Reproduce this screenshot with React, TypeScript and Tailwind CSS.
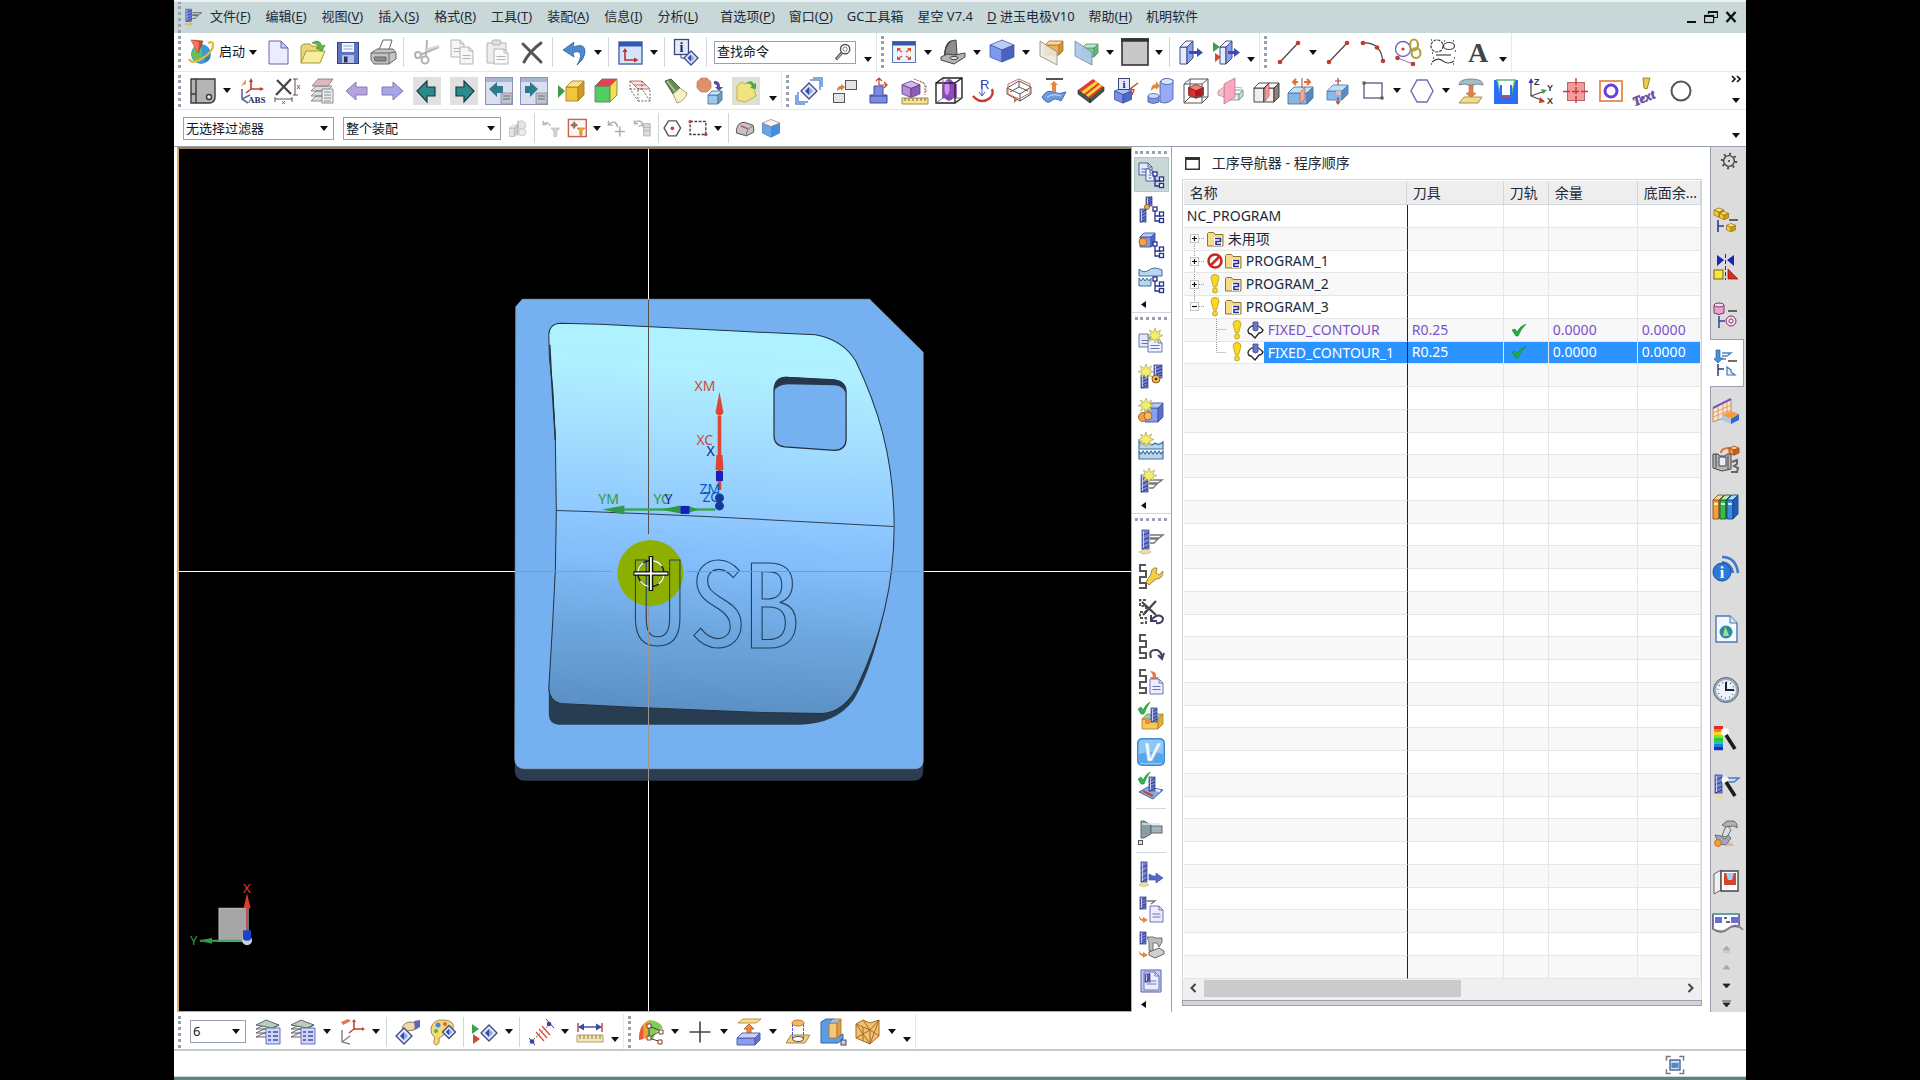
import React, { type ReactNode } from "react";

/* ---------- drawing parts shared by the icons ---------- */

type BoxProps = { x: number; y: number; w: number; h: number; d?: number; f: string; t: string; s: string; k?: string };
const Box = ({ x, y, w, h, d = 5, f, t, s, k = "#555" }: BoxProps) => (
  <g stroke={k} strokeWidth=".9" strokeLinejoin="round">
    <path d={`M${x} ${y + d}h${w}v${h}h${-w}z`} fill={f} />
    <path d={`M${x} ${y + d}l${d} ${-d}h${w}l${-d} ${d}z`} fill={t} />
    <path d={`M${x + w} ${y + d}l${d} ${-d}v${h}l${-d} ${d}z`} fill={s} />
  </g>
);

type IsoProps = { x: number; y: number; r: number; a: string; b: string; c: string; k?: string };
const Iso = ({ x, y, r, a, b, c, k = "#445" }: IsoProps) => (
  <g stroke={k} strokeWidth=".8" strokeLinejoin="round">
    <path d={`M${x} ${y - r}l${r} ${r / 2.4}l${-r} ${r / 2.4}l${-r} ${-r / 2.4}z`} fill={a} />
    <path d={`M${x - r} ${y - r + r / 2.4}l${r} ${r / 2.4}v${r}l${-r} ${-r / 2.4}z`} fill={b} />
    <path d={`M${x + r} ${y - r + r / 2.4}l${-r} ${r / 2.4}v${r}l${r} ${-r / 2.4}z`} fill={c} />
  </g>
);

const Dia = ({ x, y, r }: { x: number; y: number; r: number }) => (
  <g strokeLinejoin="round">
    <path d={`M${x - r} ${y}L${x} ${y - r}L${x + r} ${y}L${x} ${y + r}z`} fill="#dfe4f6" stroke="#3d4a86" strokeWidth="1.3" />
    <path d={`M${x - r / 2} ${y}L${x} ${y - r / 2}V${y + r / 2}z`} fill="#2b4bb0" />
    <path d={`M${x + r / 2} ${y}L${x} ${y - r / 2}V${y + r / 2}z`} fill="#8ea4e0" />
  </g>
);

type DocProps = { x: number; y: number; w: number; h: number; f?: string; k?: string };
const Doc = ({ x, y, w, h, f = "#eceeff", k = "#6d74ac" }: DocProps) => (
  <g stroke={k} strokeWidth="1" strokeLinejoin="round">
    <path d={`M${x} ${y}h${w - 4}l4 4v${h - 4}h${-w}z`} fill={f} />
    <path d={`M${x + w - 4} ${y}v4h4`} fill="none" />
    <path d={`M${x + 2.5} ${y + h / 2}h${w - 5}m${5 - w} 3h${w - 5}`} fill="none" />
  </g>
);

const Mill = ({ x, y, h = 15, w = 7 }: { x: number; y: number; h?: number; w?: number }) => (
  <g>
    <rect x={x} y={y} width={w} height={h} fill="#7484d4" stroke="#3f4a94" strokeWidth=".8" />
    <path d={`M${x} ${y + h * 0.3}l${w} -3M${x} ${y + h * 0.55}l${w} -3M${x} ${y + h * 0.8}l${w} -3M${x} ${y + h}l${w} -3`} stroke="#2c3680" strokeWidth="1" />
    <path d={`M${x + 1.5} ${y + 1}v${h - 2}`} stroke="#c3ccf6" strokeWidth="1" />
  </g>
);

const Passes = ({ x, y, k = "#777" }: { x: number; y: number; k?: string }) => (
  <path d={`M${x} ${y}h13l-4 3h-9M${x} ${y + 4}h8l-4 4h-4`} fill="none" stroke={k} strokeWidth="1.4" />
);

const Spark = ({ x, y }: { x: number; y: number }) => (
  <path
    d={`M${x} ${y - 7}l1.6 4.4l4 -2.4l-1.8 4.2l4.2 1.4l-4.4 1.4l2 4.2l-4 -2.4l-1.6 4.2l-1.6 -4.2l-4 2.4l2 -4.2l-4.4 -1.4l4.2 -1.4l-1.8 -4.2l4 2.4z`}
    fill="#f4ee6a"
    stroke="#a8a860"
    strokeWidth=".7"
  />
);

const Tree = () => (
  <g fill="#fff" stroke="#23308c" strokeWidth="1.3">
    <path d="M18 15v10h6M18 20h6" fill="none" />
    <rect x="16" y="11" width="4" height="4" />
    <rect x="22.500" y="16" width="4" height="4" />
    <rect x="22.500" y="22.500" width="4" height="4" />
  </g>
);

const Zig = ({ k = "#555", dash }: { k?: string; dash?: string }) => (
  <path d="M9 2H3v6h6v6H3v6h6v5H2" fill="none" stroke={k} strokeWidth="2" strokeDasharray={dash} />
);

const Tick = ({ x, y }: { x: number; y: number }) => (
  <path d={`M${x} ${y}l3 -2l2 3q3 -6 7 -8q-4 6 -6 12h-3z`} fill="#2fb450" stroke="#1c8a38" strokeWidth=".6" />
);

const Waves = ({ y }: { y: number }) => (
  <g fill="#b9d6ee" stroke="#3d6f9c" strokeWidth="1.2">
    <path d={`M2 ${y}q4 5 8 1q4 5 8 1q4 3 8 -1v7h-24z`} />
    <path d={`M2 ${y + 10}l2 3l2 -3l2 3l2 -3l2 3l2 -3l2 3l2 -3l2 3l2 -3l2 3l2 -3v8h-24z`} />
  </g>
);

const Dots = ({ pts, c = "#c43a30" }: { pts: number[][]; c?: string }) => (
  <g fill={c}>
    {pts.map(([x, y]) => (
      <circle key={`${x}-${y}`} cx={x} cy={y} r="2.300" />
    ))}
  </g>
);

const Folder = ({ k = "#a8963a" }: { k?: string }) => (
  <g strokeLinejoin="round">
    <path d="M2 25V8l3-2h6l2 2h9v6z" fill="#e8d678" stroke={k} />
    <path d="M2 25l5-12h19l-5 12z" fill="#f8ec9e" stroke={k} />
    <path d="M13 5q7-5 10 3l3-1l-3 6l-6-3l3-1q-2-4-7-4z" fill="#5cb848" stroke="#388a2c" strokeWidth=".7" />
  </g>
);

const BLUE = { a: "#a9bdf6", b: "#7690e6", c: "#4d68c8", k: "#3a4fa0" };

const icons: Record<string, ReactNode> = {
  app: (
    <g>
      <Mill x={4} y={3} h={17} w={8} />
      <Passes x={13} y={8} k="#667" />
      <path d="M3 24q5-4 10 0q-4 3-10 0z" fill="#f2dc62" stroke="#a89030" strokeWidth=".6" />
    </g>
  ),
  start: (
    <g>
      <circle cx="14" cy="16" r="10" fill="#3d9bd4" />
      <path d="M7 10q8-3 8 5t-7 8q-6-5-1-13z" fill="#64bf5c" />
      <path d="M17 18q5-4 6 0t-5 6z" fill="#2c7fc0" />
      <path d="M2 21q3 6 14-1t10-14q0-3-5-1" fill="none" stroke="#e8b83a" strokeWidth="2.200" />
      <path d="M4 2l12 1l-5 12z" fill="#d8402e" stroke="#a82a1c" strokeWidth=".6" />
      <path d="M4 2l8 2l-1 11z" fill="#f07860" />
    </g>
  ),
  newf: (
    <g stroke="#6a64a8" strokeLinejoin="round">
      <path d="M5 3h12l7 7v16H5z" fill="#ecebff" />
      <path d="M17 3v7h7z" fill="#c9c6f2" />
    </g>
  ),
  open: <Folder />,
  save: (
    <g>
      <rect x="3.500" y="4.500" width="21" height="21" fill="#5b74c4" stroke="#35467e" />
      <rect x="8" y="5" width="12" height="9" fill="#f4f6ff" />
      <path d="M9.500 8h9m-9 3h9" stroke="#9aa5cc" />
      <rect x="8" y="17" width="12" height="8" fill="#b8c2e6" />
      <rect x="10" y="18.500" width="3.500" height="6" fill="#26335e" />
    </g>
  ),
  print: (
    <g stroke="#666" strokeLinejoin="round">
      <path d="M10 12l4-10h9l-3 10z" fill="#fff" />
      <path d="M2 15l6-4h16l3 4v6l-7 5H5l-3-4z" fill="#c4c4c4" />
      <path d="M2 15h18l7-1M20 15v11" fill="none" />
      <path d="M5 19h12v4H6z" fill="#8c8c8c" />
    </g>
  ),
  cut: (
    <g fill="none" stroke="#b4b4b4" strokeWidth="2">
      <path d="M14 2l-1 16M26 9L7 17" />
      <circle cx="5" cy="17" r="3" />
      <circle cx="12" cy="22" r="3.500" />
      <path d="M26 8l-14 4" stroke="#d6d6d6" />
    </g>
  ),
  copy: (
    <g>
      <Doc x={3} y={2} w={13} h={17} f="#f6f6f6" k="#b4b4b4" />
      <Doc x={12} y={9} w={13} h={17} f="#f6f6f6" k="#b4b4b4" />
    </g>
  ),
  paste: (
    <g>
      <path d="M4 5h19v20H4z" fill="#eee" stroke="#b4b4b4" />
      <rect x="9" y="2" width="9" height="5" rx="2" fill="#ddd" stroke="#b4b4b4" />
      <Doc x={11} y={11} w={14} h={15} f="#fafafa" k="#b4b4b4" />
    </g>
  ),
  del: <path d="M5 6l18 18M23 5Q12 13 6 24" stroke="#555" strokeWidth="3" strokeLinecap="round" fill="none" />,
  undo: <path d="M3 12L14 4l-1 5q13-5 12 6q-1 7-8 12q6-10 2-13q-3-1-6 1l1 4z" fill="#4f88cf" stroke="#3263a4" strokeWidth=".8" />,
  wcs: (
    <g>
      <rect x="3" y="4" width="23" height="22" fill="#d5e4f8" stroke="#4065ae" strokeWidth="1.400" />
      <rect x="3" y="4" width="23" height="4.500" fill="#3258b4" />
      <path d="M9 12v10h11" fill="none" stroke="#b8322a" strokeWidth="1.600" />
      <path d="M6.500 14L9 10l2.500 4zM18 19.500l4.500 2.500l-4.500 2.500z" fill="#b8322a" />
    </g>
  ),
  info: (
    <g>
      <rect x="2.500" y="1.500" width="14" height="15" fill="#e6e9fa" stroke="#3c4878" strokeWidth="1.300" />
      <text x="9.500" y="14" textAnchor="middle" className="text-[14px] font-bold" fill="#1e2c66" fontFamily="Liberation Serif, serif">i</text>
      <Dia x={19} y={20} r={7} />
      <path d="M9 17v3h3" fill="none" stroke="#3c4878" />
    </g>
  ),
  mag: (
    <g fill="none" stroke="#555" strokeWidth="2">
      <circle cx="17" cy="10" r="6.500" />
      <circle cx="17" cy="10" r="3" strokeWidth="1" />
      <path d="M12.500 15L4 24.500" strokeWidth="4" />
      <path d="M12 16l-7 8" stroke="#ddd" strokeWidth="1.400" />
    </g>
  ),
  fit: (
    <g>
      <rect x="2.500" y="3.500" width="23" height="21" fill="#eef3fc" stroke="#5b78b8" />
      <rect x="2.500" y="3.500" width="23" height="4" fill="#3558a8" />
      <path d="M7 14v-4h4zM21 14v-4h-4zM7 18v4h4zM21 18v4h-4z" fill="#d8502c" />
      <path d="M8 11l4 3M20 11l-4 3M8 21l4-3M20 21l-4-3" stroke="#d8502c" strokeWidth="1.300" />
    </g>
  ),
  shade: (
    <g stroke="#444" strokeLinejoin="round">
      <path d="M6 20q-1-13 6-17l5-1l1 14z" fill="#8e8e8e" />
      <path d="M6 20q-1-13 6-17" fill="none" strokeWidth="1.500" />
      <path d="M2 19l6-3l8 1l10-2v4l-11 7l-13-4z" fill="#b4b4b4" />
      <ellipse cx="15" cy="20" rx="4" ry="1.600" fill="#e4e4e4" />
    </g>
  ),
  cube: <Iso x={14} y={14} r={12} a="#bccafa" b="#7f99ee" c="#4a63c0" k="#4258a8" />,
  clipA: (
    <g strokeWidth=".8">
      <Box x={8} y={3} w={14} h={10} d={4} f="#eeb25c" t="#f8d69a" s="#d8923a" k="#b07a34" />
      <path d="M3 3l17 11v13L3 18z" fill="#ece8dc" fillOpacity=".85" stroke="#8c887c" />
    </g>
  ),
  clipB: (
    <g strokeWidth=".8">
      <Box x={10} y={6} w={12} h={9} d={4} f="#8ccf9c" t="#bce6c4" s="#6ab47c" k="#5a9868" />
      <path d="M3 3l17 11v13L3 18z" fill="#a9c6e8" fillOpacity=".9" stroke="#6a86aa" />
    </g>
  ),
  bg: (
    <g>
      <rect x="1" y="1" width="26" height="26" fill="#c8c8c8" stroke="#333" strokeWidth="1.600" />
      <path d="M0 2h28" stroke="#333" strokeWidth="3.500" />
    </g>
  ),
  slabOut: (
    <g>
      <Box x={3} y={3} w={7} h={17} d={6} f="#e6eaff" t="#f2f4ff" s="#8c9eea" k="#33406e" />
      <path d="M12 13h8v-3l6 4.500l-6 4.500v-3h-8z" fill="#3a4cb4" />
    </g>
  ),
  slabIn: (
    <g>
      <path d="M1 4l7 5l-7 5z" fill="#3da04c" />
      <path d="M3 15l6 4l-6 5z" fill="#d04a34" />
      <Box x={8} y={3} w={6} h={17} d={6} f="#e6eaff" t="#f2f4ff" s="#8c9eea" k="#33406e" />
      <path d="M16 13h6v-3l6 4.500l-6 4.500v-3h-6z" fill="#3a4cb4" />
    </g>
  ),
  line: (
    <g>
      <path d="M5 24L23 5" stroke="#444" strokeWidth="1.200" />
      <Dots pts={[[5, 24], [23, 5]]} />
    </g>
  ),
  arc: (
    <g>
      <path d="M4 5q18-1 20 19" stroke="#444" strokeWidth="1.200" fill="none" />
      <Dots pts={[[4, 5], [18, 9.5], [24, 23]]} />
    </g>
  ),
  curves: (
    <g fill="none">
      <circle cx="9" cy="11" r="7.500" stroke="#7467b8" strokeWidth="1.400" />
      <circle cx="9" cy="11" r="1.600" fill="#c43a30" />
      <ellipse cx="20" cy="7" rx="4" ry="5.500" stroke="#b4a038" strokeWidth="2.200" />
      <ellipse cx="22" cy="15" rx="4.500" ry="5" stroke="#b4a038" strokeWidth="2.200" />
      <path d="M4 20l15 6" stroke="#8d70b8" />
      <Dots pts={[[3.5, 20], [19, 26]]} />
    </g>
  ),
  shapes: (
    <g fill="none" stroke="#444" strokeWidth="1.200">
      <circle cx="8" cy="8" r="6" strokeDasharray="3 1" />
      <ellipse cx="20" cy="8" rx="5.500" ry="3.500" />
      <path d="M7 17h15" />
      <path d="M3 24q6-5 11-1t11 0" />
      <path d="M2 2h1M15 3h1M24 3h1M3 15h1M26 13h1M4 20h1M25 20h1M2 26h1M24 26h1" strokeWidth="1.600" />
    </g>
  ),
  textA: (
    <text x="14" y="24" textAnchor="middle" className="text-[28px] font-bold" fill="#444" fontFamily="Liberation Serif, serif">A</text>
  ),
  layerBox: (
    <g stroke="#3a3a3a" strokeWidth="1.400">
      <path d="M2 2h24v18q0 6-6 6H2z" fill="#b4b4b4" />
      <path d="M7 2v24M2 17h5" fill="none" />
      <circle cx="20" cy="20" r="2.500" fill="#eee" />
    </g>
  ),
  abs: (
    <g>
      <path d="M3 9l5-7v5z" fill="#e0a050" />
      <path d="M13 3v9h11M13 12l-5 4" fill="none" stroke="#b84030" strokeWidth="1.600" />
      <path d="M11 5l2-4l2 4zM22 10l4 2l-4 2z" fill="#b84030" />
      <path d="M4 12v10l6 4M4 22l8-4" fill="none" stroke="#6068a8" strokeWidth="1.600" />
      <text x="10" y="26" className="text-[9px] font-bold" fill="#2a2a5c" fontFamily="Liberation Serif, serif">ABS</text>
    </g>
  ),
  xdim: (
    <g fill="none">
      <path d="M4 3l14 14M18 2L3 18" stroke="#444" strokeWidth="2.200" />
      <path d="M22 2v16M20 2h5M20 18h5M2 22h17M2 20v5M19 20v5" stroke="#555" />
      <path d="M24 8l3 4m0-4l-3 4M9 24l3 3m0-3l-3 3" stroke="#c04830" />
    </g>
  ),
  sheets: (
    <g stroke="#777" strokeWidth=".8">
      <path d="M3 24l5-5h16l-5 5zM3 19l5-5h16l-5 5zM3 14l5-5h16l-5 5z" fill="#ddd" />
      <path d="M4 9l6-7h15l-5 7z" fill="#e0b8bc" />
      <path d="M14 12h11v14H14z" fill="#eceaf2" />
      <path d="M16 15h7m-7 3h7m-7 3h7m-7 3h7" />
    </g>
  ),
  left: <path d="M3 14L13 5v5h11v8H13v5z" fill="#b4a4dc" stroke="#8a7cb8" />,
  right: <path d="M25 14L15 5v5H4v8h11v5z" fill="#a8a4e8" stroke="#7c7cc0" />,
  leftBox: (
    <g>
      <path d="M0 0h28v28H0z" fill="#e0e0e0" />
      <path d="M4 14L14 4v6h8v9h-8v6z" fill="#2d8a8c" stroke="#163f44" strokeWidth="1.200" />
    </g>
  ),
  rightBox: (
    <g>
      <path d="M0 0h28v28H0z" fill="#e0e0e0" />
      <path d="M24 14L14 4v6H6v9h8v6z" fill="#2d8a8c" stroke="#163f44" strokeWidth="1.200" />
    </g>
  ),
  winL: (
    <g>
      <rect x=".500" y=".500" width="27" height="27" fill="#d9dff0" stroke="#8a94b4" />
      <path d="M1 1h26v4H1z" fill="#a8b4d4" />
      <path d="M4 12l8-7v4h6v7h-6v4z" fill="#2d7a8c" />
      <path d="M16 16h11v11H16z" fill="#c0c4cc" stroke="#889" strokeWidth=".8" />
      <path d="M18 19h7m-7 3h7" stroke="#667" />
    </g>
  ),
  winR: (
    <g>
      <rect x=".500" y=".500" width="27" height="27" fill="#d9dff0" stroke="#8a94b4" />
      <path d="M1 1h26v4H1z" fill="#a8b4d4" />
      <path d="M18 12l-8-7v4H5v7h5v4z" fill="#2d7a8c" />
      <path d="M16 16h11v11H16z" fill="#c0c4cc" stroke="#889" strokeWidth=".8" />
      <path d="M18 19h7m-7 3h7" stroke="#667" />
    </g>
  ),
  addBox: (
    <g>
      <path d="M1 8l7 6l-7 7z" fill="#3f9a48" />
      <Box x={9} y={4} w={12} h={14} d={6} f="#f3c53c" t="#fbe48c" s="#cf9a22" k="#a88424" />
    </g>
  ),
  rgb: <Box x={3} y={2} w={15} h={16} d={7} f="#4fcf5e" t="#e8404c" s="#efe24a" k="#777" />,
  wire: (
    <g fill="none" strokeWidth=".9">
      <path d="M3 4h12l8 8H11zM7 8h12" stroke="#c46060" fill="#f8e4e4" />
      <path d="M3 4v8l8 12V12M11 24h12V12M3 12h12l8 12M15 4v8" stroke="#555" strokeDasharray="2 1.500" />
    </g>
  ),
  lamp: (
    <g strokeLinejoin="round">
      <path d="M3 4l6-2l9 9l-7 6z" fill="#6c8a50" stroke="#44603a" />
      <path d="M11 17l7-6l7 5q-2 8-10 10z" fill="#f4f0c8" stroke="#a8a478" />
      <path d="M5 4l8 10" stroke="#b4cc94" strokeWidth="1.500" />
    </g>
  ),
  octo: (
    <g>
      <path d="M4 1h6l4 4v6l-4 4H4l-4-4V5z" fill="#e0906a" stroke="#b86a48" strokeWidth=".6" />
      <path d="M17 4q6-1 6 6h3l-4 4l-4-4h2q0-3-3-3z" fill="#5a4aa0" />
      <Box x={11} y={14} w={10} h={9} d={4} f="#9cc8e4" t="#c8e4f4" s="#6a9cc4" k="#4a7ca0" />
    </g>
  ),
  folderBox: (
    <g>
      <path d="M0 0h28v28H0z" fill="#e0dfd4" />
      <path d="M5 9l5-4l3 2l7-2l4 14l-11 6l-8-2z" fill="#f0e480" stroke="#c0b050" />
      <path d="M14 6q5-4 8 1l2-1v6l-6-1l2-2q-2-3-6-3z" fill="#4ca848" />
    </g>
  ),
  swap: (
    <g>
      <Dia x={14} y={14} r={8} />
      <path d="M15 3h10v10M18 1h9v9M13 25H3V15M10 27H1v-9" fill="none" stroke="#5a8cd4" strokeWidth="1.500" />
    </g>
  ),
  move2: (
    <g>
      <rect x="15.500" y="3.500" width="11" height="9" fill="#e4e4e4" stroke="#555" />
      <rect x="3.500" y="16.500" width="11" height="9" fill="#e4e4e4" stroke="#555" />
      <path d="M7 14q0-5 4-5V7l4 3l-4 4v-2q-2 0-4 2z" fill="#d88038" />
    </g>
  ),
  datum: (
    <g>
      <path d="M9 9h9v9h4v8H5v-8h4z" fill="#7c8ce0" stroke="#3f4a9c" />
      <path d="M5 19h17" stroke="#3f4a9c" />
      <path d="M14 8V1M11 4l3-3l3 3M14 8h8M19 5l3 3l-3 3" fill="none" stroke="#c8452c" strokeWidth="1.200" />
    </g>
  ),
  measureBox: (
    <g>
      <Iso x={11} y={13} r={9} a="#d4b8e8" b="#b48cd8" c="#8c60b8" k="#5a3a80" />
      <path d="M2 21h26v6H2z" fill="#f4e29a" stroke="#a08a40" />
      <path d="M5 21v3m4-3v3m4-3v3m4-3v3m4-3v3m4-3v3" stroke="#806a30" />
      <path d="M14 2l10 4M25 8v10" stroke="#c84838" strokeDasharray="2 1" />
      <path d="M20 4l6 4v8" stroke="#3c9a50" strokeDasharray="2 2" fill="none" />
    </g>
  ),
  bound: (
    <g fill="none">
      <path d="M7 7h15v14H7z" fill="#a86ad0" />
      <ellipse cx="14" cy="13" rx="6" ry="11" fill="#9148c4" />
      <ellipse cx="12" cy="11" rx="2.500" ry="7" fill="#c898e8" />
      <path d="M1 6h19v20H1zM1 6l7-5h19v20l-7 5M20 6l7-5" stroke="#222" strokeWidth="1.400" />
      <path d="M8 1v20h19M8 21l-7 5" stroke="#555" strokeWidth=".8" />
    </g>
  ),
  radius: (
    <g>
      <text x="10" y="12" className="text-[13px]" fill="#3c4cb0" fontFamily="Liberation Sans, sans-serif">R</text>
      <path d="M12 4v14M9 15l3 4l3-4" fill="none" stroke="#4454b8" />
      <path d="M3 19q8 9 17 2q4-4 2-9" fill="none" stroke="#c83a34" strokeWidth="2.400" />
    </g>
  ),
  wireBox: (
    <g fill="none" strokeWidth="1">
      <path d="M2 11l12-7l12 6l-11 7z" stroke="#555" />
      <path d="M2 11v6l13 7l11-7v-7M15 17v7M14 4v6l-9 5m9-5l9 4" stroke="#555" />
      <path d="M3 7l11-5l11 5v9l-11 6l-11-5z" stroke="#c87058" />
      <path d="M9 20v6l4-4z" fill="#c87058" />
    </g>
  ),
  surfUp: (
    <g>
      <path d="M2 20q5-8 11-5t13 0l-5 9q-6-4-10 0t-9-4z" fill="#6c9ce0" stroke="#3c6ab4" />
      <path d="M7 20q7-4 14-1" stroke="#d0e0f8" fill="none" />
      <path d="M6 2h17" stroke="#555" strokeWidth="2" />
      <path d="M14 4l4 4h-2v7h-4V8h-2z" fill="#e8883c" />
    </g>
  ),
  stripes: (
    <g strokeLinejoin="round">
      <path d="M1 13L16 2l11 8l-14 12z" fill="#e43a30" />
      <path d="M4 15L19 4l2 2L7 17zM9 18L23 7l2 2L11 20z" fill="#f4d83c" />
      <path d="M1 13l12 9v4L1 17zM13 22l14-12v4L13 26z" fill="#3f5a48" stroke="#222" strokeWidth=".6" />
    </g>
  ),
  infoBox: (
    <g>
      <Iso x={11} y={19} r={8.500} {...BLUE} />
      <rect x="6.500" y="1.500" width="11" height="11" fill="#e4e8fa" stroke="#39457a" />
      <text x="12" y="11" textAnchor="middle" className="text-[11px] font-bold" fill="#1e2c66" fontFamily="Liberation Serif, serif">i</text>
      <path d="M26 6l-8 6l4 1l-2 5" fill="none" stroke="#c8402c" strokeWidth="1.300" />
    </g>
  ),
  cyls: (
    <g strokeWidth=".8">
      <path d="M13 5q2-5 13-2v19q-6 6-13 3z" fill="#98aaf0" stroke="#4458a8" />
      <ellipse cx="20" cy="4.500" rx="6" ry="3" fill="#dce4ff" stroke="#4458a8" />
      <path d="M1 19h11v6q-6 3-11 0z" fill="#7c92e4" stroke="#4458a8" />
      <ellipse cx="6.500" cy="19" rx="5.500" ry="2.500" fill="#cdd7fb" stroke="#4458a8" />
      <path d="M4 14q0-7 5-7V4l4 5l-4 4v-2q-3 0-5 3z" fill="#e08a3c" />
    </g>
  ),
  redBox: (
    <g fill="none">
      <Iso x={14} y={15} r={7.500} a="#f88078" b="#e02c2c" c="#b01c1c" k="#a01818" />
      <path d="M2 7h18v19H2zM2 7l6-5h18v18l-6 6M20 7l6-5M8 2v18h18M8 20l-6 6" stroke="#555" strokeWidth="1" />
    </g>
  ),
  plane: (
    <g>
      <Box x={13} y={13} w={9} h={6} d={4} f="#e4f0e8" t="#f4faf6" s="#c4dccc" k="#798" />
      <path d="M7 7l11-6v19l-11 7z" fill="#f8a8c0" stroke="#c86484" strokeWidth=".7" />
      <path d="M1 14l6-4v10l-6-2zM18 10l7 1" fill="#f6c4d0" stroke="#a88" strokeWidth=".7" />
    </g>
  ),
  split: (
    <g>
      <Box x={2} y={6} w={10} h={14} d={5} f="#f2eeee" t="#fff" s="#d2caca" k="#333" />
      <Box x={12} y={6} w={10} h={14} d={5} f="#f2eeee" t="#fff" s="#8c8484" k="#333" />
      <path d="M13 11l4-4v12l-4 5z" fill="#f09c9c" stroke="#a44" strokeWidth=".6" />
    </g>
  ),
  stretch: (
    <g>
      <Box x={1} y={10} w={19} h={11} d={6} f="#86b6e2" t="#c4e0f4" s="#5688c0" k="#4878a8" />
      <path d="M13 16l5-6v12l-5 5z" fill="#e8a8a0" stroke="#b05848" strokeWidth=".6" />
      <path d="M11 5H6m3-3L6 5l3 3M17 5h6m-3-3l3 3l-3 3" fill="none" stroke="#e07030" strokeWidth="2" />
      <path d="M15 1v10" stroke="#c04030" />
    </g>
  ),
  trimBox: (
    <g>
      <Box x={3} y={8} w={15} h={9} d={6} f="#8cb8e8" t="#c4dff6" s="#5c8cc4" k="#5080b0" />
      <path d="M14 1v7M11 4h6M14 20v7M12 24l2 3l2-3" fill="none" stroke="#a04838" strokeWidth="1.200" />
      <path d="M12 14h5v4h-5z" fill="#dcbcc0" />
    </g>
  ),
  rect: (
    <g>
      <rect x="5" y="6" width="18" height="15" fill="none" stroke="#56568c" strokeWidth="1.300" />
      <path d="M3.500 4.500h3v3h-3zM21.500 19.500h3v3h-3z" fill="#555" />
    </g>
  ),
  hex: <path d="M9 3h10l6 11l-6 11H9L3 14z" fill="none" stroke="#706cb0" strokeWidth="1.400" />,
  funnel: (
    <g strokeLinejoin="round">
      <path d="M2 8q0-6 12-6t12 6l-6-1q-6 3-12 0z" fill="#a8bcc8" stroke="#607888" strokeWidth=".8" />
      <path d="M12 8h4v8h3l-5 5l-5-5h3z" fill="#e08048" stroke="#a85a2c" strokeWidth=".5" />
      <path d="M2 26l5-6h18l-4 6z" fill="#f0dc8c" stroke="#a8904c" />
    </g>
  ),
  pocket: (
    <g>
      <path d="M2 3h24v24H2z" fill="#2d6cf4" />
      <path d="M5 3l4 16h10l4-16z" fill="#fff" stroke="#58b878" strokeWidth="1.400" />
      <path d="M9 8v11h10V8" fill="none" stroke="#2d6cf4" strokeWidth="2" />
      <path d="M10 19h8" stroke="#e04848" strokeWidth="1.600" />
    </g>
  ),
  csys: (
    <g>
      <path d="M4 19V4M4 19l14-5M4 19l13 5" stroke="#444" strokeWidth="1.200" />
      <path d="M1.500 6L4 1l2.500 5z" fill="#2c3cb0" />
      <path d="M14 12l6 1l-4 4z" fill="#3ca848" />
      <path d="M13 20l5 5l-6 1z" fill="#c83a2c" />
      <g className="text-[9px] font-bold" fill="#333" fontFamily="Liberation Sans, sans-serif">
        <text x="7" y="8">Z</text>
        <text x="20" y="14">Y</text>
        <text x="20" y="27">X</text>
      </g>
    </g>
  ),
  target: (
    <g>
      <rect x="5.500" y="5.500" width="17" height="18" fill="#f49c9c" stroke="#b86868" />
      <path d="M14 1v26M1 14.500h26" stroke="#d8302c" strokeWidth="1.400" strokeDasharray="7 2" />
    </g>
  ),
  ringBox: (
    <g fill="none">
      <rect x="3" y="4" width="22" height="20" stroke="#e08c4c" strokeWidth="1.800" />
      <circle cx="14" cy="14" r="6" stroke="#6f3ce0" strokeWidth="3" />
    </g>
  ),
  textPen: (
    <g>
      <path d="M11 1h7l-3 11l-3-1z" fill="#eecb50" stroke="#a08430" />
      <text x="0" y="25" className="text-[13px] font-bold italic" fill="#6d4ca0" stroke="#6d4ca0" strokeWidth=".7" fontFamily="Liberation Serif, serif" transform="rotate(-22 12 20)">Text</text>
    </g>
  ),
  circle: <circle cx="14" cy="14" r="9.500" fill="none" stroke="#555" strokeWidth="2" />,

  asm: (
    <g>
      <Box x={2} y={10} w={7} h={12} d={4} f="#e4e4e4" t="#f4f4f4" s="#ccc" k="#b0b0b0" />
      <circle cx="19" cy="10" r="6" fill="#e4e4e4" stroke="#b8b8b8" />
      <circle cx="20" cy="20" r="5" fill="#eee" stroke="#b8b8b8" />
      <path d="M14 3v22" stroke="#999" />
    </g>
  ),
  filterUndo: (
    <g fill="none" stroke="#b8b8b8" strokeWidth="2">
      <path d="M4 8q6-4 9 3M3 4v5h5" />
      <path d="M14 14h12l-4 5v7h-4v-7z" fill="#d4d4d4" strokeWidth="1" />
    </g>
  ),
  filterBox: (
    <g>
      <rect x="2" y="2" width="25" height="24" fill="#fff6f4" stroke="#c46454" strokeWidth="2" />
      <path d="M10 5v10M5 10h10" stroke="#555" strokeWidth="1.600" />
      <circle cx="10" cy="10" r="3" fill="none" stroke="#a04838" />
      <path d="M14 14h11l-4 4v6h-3v-6z" fill="#f0b428" stroke="#c06830" />
    </g>
  ),
  curveUndo: (
    <g fill="none" stroke="#aaa" strokeWidth="2">
      <path d="M3 9q9-8 12 4M2 4v6h6" />
      <path d="M18 12v14M11 19h14" />
    </g>
  ),
  multiUndo: (
    <g fill="none" stroke="#b4b4b4" strokeWidth="2">
      <path d="M3 6q9-5 11 4M2 3v5h5M8 12q5-5 8 3" />
      <rect x="15" y="8" width="9" height="17" fill="#ddd" strokeWidth="1.400" />
      <path d="M15 13h9m-9 5h9" strokeWidth="1.400" />
    </g>
  ),
  hexDot: (
    <g>
      <path d="M9 4h11l6 10l-6 11H9L3 14z" fill="none" stroke="#555" strokeWidth="2" />
      <circle cx="14.500" cy="14.500" r="2.500" fill="#c43a30" />
    </g>
  ),
  marquee: (
    <g>
      <rect x="3" y="5" width="22" height="18" fill="none" stroke="#444" strokeWidth="2" strokeDasharray="4 2" />
      <Dots pts={[[3, 5], [25, 23]]} />
    </g>
  ),
  roof: (
    <g strokeLinejoin="round">
      <path d="M2 16q2-10 11-10l12 4q2 3 1 10l-10 5l-14-4z" fill="#c4c4c4" stroke="#555" strokeWidth="1.400" />
      <path d="M16 24q-1-8 9-13" fill="none" stroke="#555" />
      <path d="M8 11l10 4" stroke="#c85040" strokeWidth="2" />
    </g>
  ),
  cubeTop: (
    <g>
      <path d="M2 7l12 5l12-5v14l-12 6l-12-6z" fill="#67a4ea" stroke="#4878b8" />
      <path d="M14 12l12-5v14l-12 6z" fill="#4a8cdc" />
      <path d="M2 7l12-5l12 5l-12 5z" fill="#f4f6fc" stroke="#b07878" />
    </g>
  ),

  opTree: (
    <g>
      <Doc x={2} y={2} w={13} h={12} f="#e4eafc" k="#4a5c98" />
      <Doc x={9} y={8} w={8} h={12} f="#f4f6ff" k="#4a5c98" />
      <Tree />
    </g>
  ),
  toolTree: (
    <g>
      <Mill x={9} y={1} h={9} w={6} />
      <circle cx="10" cy="11" r="2.500" fill="#f2b040" stroke="#a06a20" />
      <Mill x={3} y={13} h={13} w={6} />
      <Tree />
    </g>
  ),
  geoTree: (
    <g>
      <Box x={3} y={2} w={11} h={10} d={4} f="#7f9ae8" t="#b8c8f8" s="#5068c4" k="#4058a8" />
      <circle cx="6" cy="11" r="4" fill="#f2a24c" stroke="#b06820" />
      <Tree />
    </g>
  ),
  waveTree: (
    <g>
      <path d="M2 3q5 5 10 1t13 0v6H2z" fill="#b9d6ee" stroke="#3d6f9c" />
      <path d="M2 12l2 3l2-3l2 3l2-3l2 3l2-3v8H2z" fill="#b9d6ee" stroke="#3d6f9c" />
      <Tree />
    </g>
  ),
  opNew: (
    <g>
      <Doc x={2} y={7} w={13} h={13} f="#e4eafc" k="#6878a8" />
      <Doc x={11} y={12} w={14} h={13} f="#eef1ff" k="#6878a8" />
      <Spark x={18} y={8} />
    </g>
  ),
  toolNew: (
    <g>
      <Mill x={17} y={3} h={13} w={8} />
      <circle cx="19" cy="17" r="4" fill="#f4b848" stroke="#8a5a18" />
      <circle cx="19" cy="17" r="1.300" fill="#333" />
      <Mill x={4} y={13} h={13} w={7} />
      <Spark x={9} y={9} />
    </g>
  ),
  geoNew: (
    <g>
      <Box x={8} y={6} w={13} h={14} d={5} f="#86a2ee" t="#bccbfa" s="#5472cc" k="#4058a8" />
      <circle cx="6" cy="20" r="4.500" fill="#f2a24c" stroke="#b06820" />
      <circle cx="11" cy="19" r="4" fill="#f7b868" stroke="#b06820" />
      <Spark x={9} y={8} />
    </g>
  ),
  waveNew: (
    <g>
      <Waves y={9} />
      <Spark x={9} y={7} />
    </g>
  ),
  opsNew: (
    <g>
      <Mill x={4} y={8} h={17} w={7} />
      <Passes x={12} y={13} />
      <Spark x={12} y={8} />
    </g>
  ),
  genPath: (
    <g>
      <Mill x={5} y={2} h={19} w={7} />
      <Passes x={13} y={7} />
      <path d="M2 24q7-5 12 0q-6 4-12 0z" fill="#f0e0a0" stroke="#b8a870" strokeWidth=".6" />
    </g>
  ),
  editPath: (
    <g>
      <Zig />
      <path d="M26 8l-4 4l-3-2l1-5q-6-1-6 6l-5 8l3 3l7-6q7 0 7-8z" fill="#f2cc4c" stroke="#98802c" strokeWidth=".9" />
    </g>
  ),
  delPath: (
    <g>
      <Zig dash="3 1.500" />
      <path d="M5 4l14 13M19 3L6 17" stroke="#444" strokeWidth="2.200" />
      <path d="M14 22q8-8 12-2q0 6-7 5M14 17v6h6" fill="none" stroke="#3c3c60" strokeWidth="2" />
    </g>
  ),
  replay: (
    <g>
      <Zig />
      <path d="M14 25q-3-9 6-8q5 2 5 8M21 22l4 4l2-6" fill="none" stroke="#3c4468" strokeWidth="2" />
    </g>
  ),
  listPath: (
    <g>
      <Zig />
      <path d="M13 3q7 0 6 6h3l-5 5l-4-5h3q0-3-3-6z" fill="#e07c48" />
      <Doc x={13} y={11} w={13} h={15} />
    </g>
  ),
  verify: (
    <g>
      <Box x={5} y={11} w={16} h={10} d={5} f="#f7c858" t="#7ecfd0" s="#e6ac34" k="#b08a30" />
      <path d="M8 21h5v-5l-5-1z" fill="#f08848" />
      <Mill x={14} y={5} h={14} w={6} />
      <Tick x={1} y={6} />
    </g>
  ),
  vlogo: (
    <g>
      <rect x="0" y="0" width="28" height="28" rx="5" fill="#3f8ad8" />
      <rect x="1.500" y="1.500" width="25" height="25" rx="4" fill="#8cc8f6" />
      <path d="M2 16q12-4 24 0v9H2z" fill="#5aa6ec" />
      <text x="14" y="23" textAnchor="middle" className="text-[25px] font-bold italic" fill="#f6fbff" stroke="#a8c8e4" strokeWidth=".6" fontFamily="Liberation Sans, sans-serif">V</text>
    </g>
  ),
  gouge: (
    <g>
      <path d="M2 19l9-5l15 3l-10 9z" fill="#88aae6" stroke="#4464a8" />
      <path d="M6 18l10 5" stroke="#c84838" strokeWidth="2.500" />
      <path d="M14 16l9 2" stroke="#f0f4ff" strokeWidth="2" />
      <Mill x={12} y={4} h={14} w={6} />
      <Tick x={1} y={6} />
    </g>
  ),
  holder: (
    <g>
      <path d="M4 4h3l7 4v9l-7 4H4z" fill="#8c9ca4" stroke="#5a686e" />
      <rect x="14" y="9" width="11" height="7" fill="#a4b4bc" stroke="#5a686e" />
      <path d="M5 7h18" stroke="#dce6ea" strokeWidth="1.500" />
      <rect x="1.500" y="23.500" width="4" height="4" fill="#ddd" stroke="#555" />
    </g>
  ),
  outTool: (
    <g>
      <Mill x={4} y={1} h={20} w={6} />
      <path d="M2 24q6-5 10 0q-5 3-10 0z" fill="#f0e0a0" stroke="#b8a870" strokeWidth=".6" />
      <path d="M12 13v6h7v3l7-5l-7-5v3h-3z" fill="#5468c8" stroke="#38489c" strokeWidth=".6" />
    </g>
  ),
  post: (
    <g>
      <Mill x={3} y={1} h={12} w={6} />
      <path d="M10 5h8l-4 3" fill="none" stroke="#777" strokeWidth="1.300" />
      <path d="M2 19q1 4 4 4v-2l5 3l-5 3v-2q-4 0-4-6z" fill="#e08a3c" />
      <Doc x={13} y={10} w={13} h={16} />
    </g>
  ),
  machine: (
    <g>
      <Mill x={3} y={1} h={12} w={6} />
      <path d="M2 19q1 4 4 4v-2l5 3l-5 3v-2q-4 0-4-6z" fill="#e08a3c" />
      <path d="M10 6h6l3 1h6v4l-3 5l-2-4h-4v8h-4v-9z" fill="#bcbcbc" stroke="#666" strokeWidth=".9" />
      <path d="M12 21l10-4l5 3v3l-9 4l-6-3z" fill="#d0d0d0" stroke="#555" strokeWidth=".9" />
    </g>
  ),
  shopDoc: (
    <g>
      <path d="M4 4h20v22H4z" fill="#c4cdf2" stroke="#5565a8" />
      <Doc x={7} y={6} w={15} h={18} />
      <Mill x={8} y={8} h={8} w={5} />
    </g>
  ),

  gear: (
    <g fill="none" stroke="#444" strokeWidth="2">
      <circle cx="14" cy="14" r="7.500" />
      <circle cx="14" cy="14" r="10" strokeDasharray="2.500 5.350" strokeWidth="3" />
      <circle cx="14" cy="14" r="1.500" fill="#444" stroke="none" />
    </g>
  ),
  rAsm: (
    <g>
      <Iso x={7} y={8} r={5} a="#fbe58c" b="#f4c832" c="#d09c18" k="#a07c10" />
      <Iso x={12} y={11} r={4.500} a="#fbe58c" b="#f4c832" c="#d09c18" k="#a07c10" />
      <path d="M6 15v12M6 21h6" stroke="#2c3c90" strokeWidth="1.600" />
      <path d="M17 15h9" stroke="#222" strokeWidth="1.300" />
      <Iso x={19} y={23} r={4.500} a="#fbe58c" b="#f4c832" c="#d09c18" k="#a07c10" />
    </g>
  ),
  rCons: (
    <g>
      <path d="M5 2l7 5l-7 6zM22 2l-7 5l7 6z" fill="#1c24b4" />
      <path d="M13.500 1v26" stroke="#333" strokeDasharray="4 2" />
      <rect x="2" y="17" width="9" height="9" fill="#f8e83c" stroke="#6a6410" />
      <path d="M16 16l10 10H16z" fill="#d82c1c" stroke="#7c1810" strokeWidth=".7" />
    </g>
  ),
  rPart: (
    <g stroke="#84346c">
      <path d="M2 4v8q5 3 10 0V4z" fill="#e4a8cc" />
      <ellipse cx="7" cy="4" rx="5" ry="2" fill="#f6d8ea" />
      <path d="M16 10h9" stroke="#222" strokeWidth="1.300" />
      <path d="M7 15v12M7 20h6" stroke="#3c3c90" strokeWidth="1.500" />
      <circle cx="19" cy="20" r="5" fill="#f6d8ea" />
      <circle cx="19" cy="20" r="2" fill="#fff" />
    </g>
  ),
  rOp: (
    <g>
      <path d="M4 1h4v8h3l-5 5l-4-4l2-1z" fill="#4c90d8" stroke="#2c64a8" strokeWidth=".7" />
      <path d="M10 4h9l-4 3h-5m0 3h4" fill="none" stroke="#4c84c0" strokeWidth="1.400" />
      <path d="M16 12h9" stroke="#222" strokeWidth="1.300" />
      <path d="M6 15v12M6 20h6" stroke="#2c3c80" strokeWidth="1.500" />
      <path d="M15 18v8h8l-4-3v-2z" fill="#e8f2fc" stroke="#3c74b4" strokeWidth="1.200" />
    </g>
  ),
  rTable: (
    <g>
      <path d="M1 11l18-9v16L1 25z" fill="#fbe6c4" stroke="#a8784c" strokeWidth=".8" />
      <path d="M1 11l18-9" stroke="#7a54c0" strokeWidth="2" />
      <path d="M1 16l18-8M1 20l18-7M6 9v14M11 7v14M15 5v14" stroke="#c8906c" strokeWidth=".8" />
      <path d="M10 18l9-4l8 3l-8 5z" fill="#f79c3c" />
      <path d="M10 18l9 4v5l-9-4z" fill="#a8c8ec" />
      <path d="M27 17l-8 5v5l8-4z" fill="#2c6cc8" />
    </g>
  ),
  rMach: (
    <g>
      <path d="M9 8q0-5 8-5l2 5" fill="none" stroke="#e07030" strokeWidth="2" />
      <Iso x={22} y={6} r={5} a="#fbc48c" b="#f08838" c="#c86018" k="#a04c10" />
      <path d="M1 9h5l2 2h5l2-2h4v15l-9 2l-9-3z" fill="#b8b8b8" stroke="#444" />
      <path d="M7 12h7v9H7zM4 9v14M16 10v14" fill="#e4ecf8" stroke="#444" />
      <path d="M20 17l5-2v4l-3 2l4 2l-1 4h-6" fill="none" stroke="#666" strokeWidth="2" />
    </g>
  ),
  rBooks: (
    <g>
      <Box x={1} y={2} w={6} h={19} d={5} f="#f4a038" t="#fbd8a0" s="#c87418" k="#88501c" />
      <Box x={8} y={2} w={6} h={19} d={5} f="#3cb84c" t="#b0ecb8" s="#248838" k="#1c6428" />
      <Box x={15} y={2} w={6} h={19} d={5} f="#3c8ce4" t="#b4d8fc" s="#1c60b4" k="#184888" />
      <path d="M2 11h4M9 11h4M16 11h4" stroke="#fff" strokeWidth="1.500" />
    </g>
  ),
  rInfo: (
    <g>
      <path d="M10 3q14 0 16 16M10 8q9 1 11 11" fill="none" stroke="#3f78c8" strokeWidth="2.600" />
      <circle cx="10" cy="18" r="9" fill="#2c78dc" stroke="#1c4c98" />
      <text x="10" y="24" textAnchor="middle" className="text-[16px] font-bold" fill="#fff" fontFamily="Liberation Serif, serif">i</text>
    </g>
  ),
  rPage: (
    <g>
      <path d="M4 1h14l7 7v19H4z" fill="#f4f8ff" stroke="#4c78b4" strokeWidth="1.400" />
      <path d="M18 1v7h7" fill="#d4e4f8" stroke="#4c78b4" />
      <circle cx="14" cy="17" r="6.500" fill="#2f8a9c" />
      <path d="M13 12q3 4 4 9h-6z" fill="#9ce08c" />
    </g>
  ),
  rClock: (
    <g>
      <circle cx="14" cy="14" r="12.500" fill="#9aa8bc" stroke="#5c687c" />
      <circle cx="14" cy="14" r="10" fill="#eef4fc" />
      <circle cx="14" cy="14" r="8" fill="none" stroke="#667" strokeDasharray="1 3.190" strokeWidth="1.500" />
      <path d="M14 6v8h8" fill="none" stroke="#223" strokeWidth="2" />
    </g>
  ),
  rRainbow: (
    <g>
      {["#e02c1c", "#f47c1c", "#f4dc1c", "#8ce41c", "#2cc83c", "#1cc8b4", "#1c7ce4", "#1c2cc8"].map((c, i) => (
        <rect key={c} x="2" y={2 + i * 3} width="9" height="3.200" fill={c} />
      ))}
      <circle cx="13" cy="8" r="4" fill="#fff" fillOpacity=".9" />
      <path d="M14 11l9 14" stroke="#1c1c1c" strokeWidth="3.600" />
    </g>
  ),
  rWand: (
    <g>
      <Mill x={3} y={3} h={18} w={7} />
      <path d="M12 6h15l-5 4h-9" fill="none" stroke="#4c78c8" strokeWidth="1.400" />
      <path d="M2 25q6-4 9 0z" fill="#e8d870" />
      <circle cx="13" cy="8" r="3.500" fill="#fff" fillOpacity=".9" />
      <path d="M14 10l9 14" stroke="#1c1c1c" strokeWidth="3.600" />
    </g>
  ),
  rRobot: (
    <g stroke="#555" strokeWidth=".8" strokeLinejoin="round">
      <path d="M10 5l5-4h7l3 3v4l-3-2l-8 1z" fill="#b0b0b0" />
      <path d="M16 6l3 4l-4 7l-5-1l3-8z" fill="#dcdce4" />
      <path d="M3 15l6 1l4 3l3-4l3 3l-5 7l-7-1z" fill="#a4a4bc" />
      <circle cx="6" cy="23" r="3.500" fill="#f09c3c" stroke="#b06c20" />
      <path d="M12 26h11l-5-4z" fill="#d8b8a0" stroke="none" />
    </g>
  ),
  rBook: (
    <g>
      <path d="M2 6l7-4v20l-7 4z" fill="#f0f0f0" stroke="#666" />
      <path d="M9 3h17v20H9z" fill="#fff" stroke="#444" strokeWidth="1.400" />
      <path d="M12 5h12v12H12z" fill="#d8442c" />
      <path d="M14 5l2 7h4l2-7z" fill="#9cd0f4" />
    </g>
  ),
  rCard: (
    <g>
      <path d="M1 5h26v13q-7-2-11 2q-7 6-15 0z" fill="#fff" stroke="#226" strokeWidth="1.200" />
      <path d="M1 5h26" stroke="#5aa0a8" strokeWidth="2" />
      <rect x="3" y="8" width="7" height="6" fill="#6c6cd8" />
      <rect x="19" y="8" width="7" height="6" fill="#6c6cd8" />
      <path d="M12 9h3m-1 4h4" stroke="#333" strokeWidth="1.500" />
      <path d="M1 20q9 5 16-1t14 2" fill="none" stroke="#888" strokeWidth="1.800" />
    </g>
  ),

  layers: (
    <g stroke="#556" strokeWidth=".9">
      <path d="M2 19l8-4h15l-7 4zM2 15l8-4h15l-7 4zM2 11l8-4h15l-7 4z" fill="#eceeee" />
      <path d="M2 7l10-5l13 5l-7 3z" fill="#b4d0b8" />
      <path d="M12 10h14v16H12z" fill="#cfd6fa" stroke="#5868b8" />
      <path d="M14 14h3m2 0h5M14 18h3m2 0h5M14 22h3m2 0h5" stroke="#4050a0" strokeWidth="1.400" />
    </g>
  ),
  wcsDyn: (
    <g fill="none" strokeWidth="1.500">
      <path d="M16 3v8h9M16 11l-5 4" stroke="#c83c2c" />
      <path d="M14 4l2-3l2 3zM24 9l3 2l-3 2z" fill="#c83c2c" />
      <path d="M3 4l7-3l3 2l-8 4z" fill="#e07848" />
      <path d="M4 12v12l8 2M4 24l8-6" stroke="#888" />
    </g>
  ),
  editObj: (
    <g>
      <path d="M8 10q2-6 9-6l6 1l-3 7l-7 1z" fill="#f0d8ac" stroke="#98784c" />
      <path d="M20 3l6-1v7l-5 3z" fill="#5c68b8" />
      <Dia x={10} y={18} r={8} />
    </g>
  ),
  palette: (
    <g>
      <path d="M2 10q2-9 13-8t9 8q0 4-6 5l-8 5q1 6-3 7q-4-2-1-7q-5-4-4-10z" fill="#f6d878" stroke="#a8883c" />
      <circle cx="9" cy="7" r="2.500" fill="#3c8ce0" />
      <circle cx="16" cy="6" r="2" fill="#e06040" />
      <circle cx="7" cy="13" r="2" fill="#50b060" />
      <Dia x={20} y={14} r={6.500} />
    </g>
  ),
  showHide: (
    <g>
      <path d="M1 6l7 5l-7 5z" fill="#3da04c" />
      <path d="M2 16l7 5l-7 5z" fill="#d04a34" />
      <Dia x={18} y={15} r={8} />
    </g>
  ),
  measD: (
    <g>
      <path d="M4 24L24 5" stroke="#555" strokeDasharray="2 1.500" />
      <path d="M9 14l8 9M12 11l8 9M15 8l8 9" stroke="#d84838" strokeWidth="1.200" />
      <path d="M2 20l6 7M19 1l8 9" stroke="#444" />
      <Dots pts={[[5, 23.5], [22, 6]]} c="#3840b0" />
    </g>
  ),
  measR: (
    <g>
      <path d="M2 5v9M26 5v9" stroke="#b83c4c" strokeWidth="1.400" />
      <path d="M3 9h22" stroke="#3848a8" strokeWidth="1.400" />
      <path d="M2 9l6-3.500v7zM26 9l-6-3.500v7z" fill="#3848a8" />
      <path d="M1 17h26v7H1z" fill="#f4e8b8" stroke="#b0a068" />
      <path d="M4 17v4m4-4v4m4-4v4m4-4v4m4-4v4m4-4v4" stroke="#887840" />
    </g>
  ),
  region: (
    <g>
      <path d="M2 22Q2 5 13 2q10 1 13 8q-8 2-10 12q-6-4-14 0z" fill="#7ccf5c" />
      <path d="M2 22Q2 5 13 2q-3 8-3 18z" fill="#f0a03c" />
      <path d="M2 22Q2 12 6 7q1 8 0 14z" fill="#e85c38" />
      <path d="M12 8v12l12 4M12 20l11-7M12 8l12 5" fill="none" stroke="#5a3c2c" />
      <path d="M10 6h4v4h-4zM10 18h4v4h-4zM22 12h4v4h-4zM21 22h4v4h-4z" fill="#fff" stroke="#803c2c" />
    </g>
  ),
  plus: <path d="M14 3.500v21M3.500 14h21" stroke="#444" strokeWidth="1.600" />,
  extrude: (
    <g strokeWidth=".9" strokeLinejoin="round">
      <path d="M3 5l5-4h18l-5 4z" fill="#f8dc94" stroke="#b8883c" />
      <path d="M14 6l5 5h-3v6h-4v-6H9z" fill="#ee8a3c" stroke="#b8602c" />
      <Box x={2} y={15} w={18} h={7} d={5} f="#8c9cf0" t="#c8d2fc" s="#6474c8" k="#4858a8" />
    </g>
  ),
  project: (
    <g>
      <path d="M2 25l5-8h19l-5 8z" fill="#f4cf80" stroke="#a8884c" />
      <ellipse cx="14" cy="21" rx="5.500" ry="2.500" fill="#fff" stroke="#555" />
      <path d="M8.500 6v14M19.500 6v14" stroke="#5058b0" strokeDasharray="3 1" />
      <ellipse cx="14" cy="5" rx="6" ry="3" fill="#f8b868" stroke="#c8702c" />
    </g>
  ),
  lshape: (
    <g>
      <path d="M2 4l5-3h8l-4 3v14h9l4-2v5l-5 4H2z" fill="#5c9ce4" stroke="#3464a8" />
      <Box x={10} y={1} w={8} h={15} d={4} f="#f8c878" t="#9cc4f0" s="#e0a048" k="#b07c30" />
      <rect x="22" y="22" width="5" height="5" fill="#ccd" stroke="#446" />
    </g>
  ),
  mesh: (
    <g fill="none" stroke="#a06c24">
      <path d="M2 6l7-4l7 3l9-3v16l-9 8L2 20z" fill="#f4c070" />
      <path d="M2 6l14 6l9-10M16 12v14M2 20l14-8M2 6l14 20M9 2l7 10M16 26l9-24M16 12l9 6M9 9v14" />
    </g>
  ),
  full: (
    <g fill="none" stroke="#777" strokeWidth="2">
      <path d="M2 8V2h6M20 2h6v6M26 20v6h-6M8 26H2v-6" />
      <rect x="7" y="7" width="14" height="14" fill="#cfe0f4" stroke="#4c6888" />
      <path d="M9 11h10v7H9z" fill="#4c88d0" stroke="none" />
    </g>
  ),
};

const Ico = ({ n, small }: { n: string; small?: boolean }) => (
  <svg viewBox="0 0 28 28" aria-hidden="true" className={small ? "h-5 w-5 shrink-0 overflow-visible" : "h-7 w-7 shrink-0 overflow-visible"}>
    {icons[n]}
  </svg>
);

/* ---------- toolbar pieces ---------- */

const Caret = () => (
  <svg viewBox="0 0 8 5" aria-hidden="true" className="h-[5px] w-2">
    <path d="M0 0h8L4 5z" fill="#111" />
  </svg>
);

const DropButton = ({ label }: { label: string }) => (
  <button aria-label={`${label} 选项`} className="flex h-8 w-[14px] shrink-0 items-center justify-center">
    <Caret />
  </button>
);

const Grip = () => <span className="mr-px ml-1 h-8 w-1 shrink-0 border-l-3 border-dotted border-gray-400" />;
const Sep = () => <span className="mx-[3px] h-[30px] w-px shrink-0 bg-gray-300" />;
const Overflow = () => (
  <button aria-label="工具条选项" className="flex h-8 w-4 shrink-0 items-end justify-center pb-1.5">
    <Caret />
  </button>
);

/* "v" is a drop-down arrow, "|" a separator, "_" a small gap; anything else is an icon. */
const Tools = ({ list, small }: { list: string; small?: boolean }) => (
  <>
    {list.split(" ").map((t, i, all) => {
      if (t === "v") return <DropButton key={i} label={all[i - 1]} />;
      if (t === "|") return <Sep key={i} />;
      if (t === "_") return <span key={i} className="w-0.5 shrink-0" />;
      return (
        <button
          key={i}
          aria-label={t}
          className={small ? "flex h-8 w-[26px] shrink-0 items-center justify-center" : "flex h-8 w-[35px] shrink-0 items-center justify-center"}
        >
          <Ico n={t} small={small} />
        </button>
      );
    })}
  </>
);

const Combo = ({ label, value, width }: { label: string; value: string; width: string }) => (
  <label className={`relative flex h-[23px] items-center ${width}`}>
    <select
      aria-label={label}
      defaultValue={value}
      className="h-full w-full appearance-none border border-gray-400 bg-white pl-0.5 text-[13px] leading-none text-gray-900"
    >
      <option>{value}</option>
    </select>
    <span className="pointer-events-none absolute right-1.5">
      <Caret />
    </span>
  </label>
);

const menus: [string, string, string?][] = [
  ["文件(", "F", ")"],
  ["编辑(", "E", ")"],
  ["视图(", "V", ")"],
  ["插入(", "S", ")"],
  ["格式(", "R", ")"],
  ["工具(", "T", ")"],
  ["装配(", "A", ")"],
  ["信息(", "I", ")"],
  ["分析(", "L", ")"],
  ["首选项(", "P", ")"],
  ["窗口(", "O", ")"],
  ["GC工具箱", ""],
  ["星空 V7.4", ""],
  ["", "D", " 进玉电极V10"],
  ["帮助(", "H", ")"],
  ["机明软件", ""],
];

const MenuBar = () => (
  <div className="flex h-[31px] shrink-0 items-center bg-[#c8d7d7] pb-0.5 text-[13px] text-gray-800">
    <Grip />
    <span className="flex">
      <Ico n="app" small />
    </span>
    <nav className="flex items-center">
      {menus.map(([a, u, b], i) => (
        <button key={a + u} className={i < 9 ? "pr-2 pl-[7px] whitespace-nowrap" : i === 9 ? "pr-[7px] pl-3.5 whitespace-nowrap" : "px-[7px] whitespace-nowrap"}>
          {a}
          <span className="underline underline-offset-2">{u}</span>
          {b}
        </button>
      ))}
    </nav>
    <div className="mr-2 ml-auto flex items-center gap-1.5">
      <button aria-label="最小化">
        <svg viewBox="0 0 14 14" className="h-3.5 w-3.5"><path d="M3 12h9" stroke="#111" strokeWidth="2" /></svg>
      </button>
      <button aria-label="还原">
        <svg viewBox="0 0 14 14" className="h-3.5 w-3.5" fill="none" stroke="#111">
          <path d="M4.500 4V1.500h9v6H10" strokeWidth="1.200" /><path d="M4 2h10" strokeWidth="2" />
          <rect x=".600" y="5.500" width="9" height="7" strokeWidth="1.200" /><path d="M0 6h10" strokeWidth="2" />
        </svg>
      </button>
      <button aria-label="关闭">
        <svg viewBox="0 0 14 14" className="h-3.5 w-3.5"><path d="M2.500 2l9 10m0-10l-9 10" stroke="#111" strokeWidth="2.400" /></svg>
      </button>
    </div>
  </div>
);

/* ---------- graphics window ---------- */

const Viewport = () => (
  <main className="min-w-0 flex-1 border-2 border-r border-b border-[#e0a566] border-t-[#9c8058] bg-black">
    <svg viewBox="179 149 951 862" preserveAspectRatio="xMidYMid slice" className="block h-full w-full" role="img" aria-label="USB 零件模型">
      <defs>
        <linearGradient id="skin" x1=".55" y1="0" x2=".5" y2="1">
          <stop offset="0" stopColor="#adf2ff" />
          <stop offset=".12" stopColor="#b0f0ff" />
          <stop offset=".3" stopColor="#a3defe" />
          <stop offset=".5" stopColor="#8fc9ff" />
          <stop offset=".62" stopColor="#82bcfa" />
          <stop offset=".8" stopColor="#6da6de" />
          <stop offset="1" stopColor="#5b90c4" />
        </linearGradient>
      </defs>

      <path d="M514.500 760V771Q515 780.500 525 780.500H913Q922.500 780 922.500 771V760z" fill="#2a3d52" />
      <path d="M515.500 307L522 299.500H869L922.500 352.500V761Q922 768.500 914 768.500H524Q515 768 514.500 759z" fill="#75b0f1" stroke="#8fa3b8" strokeWidth=".8" />
      <path d="M548.500 685V715Q549 724 558 724.500H800Q835 724 853 700C872 668 888 610 893.500 540z" fill="#293d52" />
      <path
        d="M548.500 335Q549 324 560 323.500L600 324.500L670 328L740 331.500L815 335Q842 340 855 361C876 405 893.500 455 893.500 527C893.500 590 877 645 855 690Q842 712 822 713.500L748 712L627 707L560 703.500Q549 701 548.500 688L552.500 620L555 570L556 510L555 440L552.500 390L549 357z"
        fill="url(#skin)"
        stroke="#23323f"
      />
      <path d="M549.500 345L551 375L555 440" fill="none" stroke="#23323f" strokeWidth="1.400" />
      <path d="M556 510.500L587 511.500L650 514L705 516.500L893 526.500" fill="none" stroke="#30404e" strokeWidth="1.100" />

      <path d="M773.500 390Q774 378 785 377.500L834 380Q845.500 382 845.500 392V440Q845 450 834 450.500L784 447Q773.500 446 773.500 436z" fill="#75b0f1" stroke="#22303c" strokeWidth="1.200" />
      <path d="M773.500 392Q774 378 785 377L834 380Q846 383 845.500 394Q843 386 834 385.500L787 384.500Q776 385 773.500 392z" fill="#26374a" />

      <circle cx="650" cy="573" r="33" fill="#8db000" />
      <g fill="none" stroke="#24425f" strokeWidth="1.100" fontFamily="'Noto Sans Mono CJK SC', 'Liberation Sans Narrow', 'Liberation Mono', monospace" className="text-[116px]">
        <text x="628" y="645">U</text>
        <text x="688" y="647">S</text>
        <text x="742" y="648">B</text>
      </g>

      <g strokeWidth="1" shapeRendering="crispEdges">
        <path d="M648.500 149V299M648.500 781V1011M179 571.500H515M923 571.500H1130" stroke="#fff" />
        <path d="M648.500 300V534" stroke="#55504c" />
        <path d="M648.500 606V781M515 571.500H611M686 571.500H923" stroke="#9c948c" />
      </g>

      <g>
        <path d="M719 416V490" stroke="#dc4634" strokeWidth="3.600" />
        <path d="M719 392l4 21q-4 6-8 0zM716 455h6l1 15h-8z" fill="#dc4634" />
        <path d="M715.500 471h7v10h-7zM717 494h4v14h-4z" fill="#1620b8" />
        <circle cx="719" cy="498" r="4.500" fill="#123c9c" />
        <circle cx="719" cy="506" r="4.500" fill="#123c9c" />
        <path d="M620 509.500H715" stroke="#3fa35c" strokeWidth="2.400" />
        <path d="M602 509.500l22-4v9zM660 509.500l20-4v8zM688 506l10 3.500l-10 3.500z" fill="#2f9a45" />
        <path d="M680 506h9v8h-9z" fill="#1620b8" />
      </g>
      <g className="text-[14px]" fontFamily="'Noto Sans', sans-serif">
        <text x="694" y="391" fill="#d0483c">XM</text>
        <text x="696" y="445" fill="#d0483c">XC</text>
        <text x="706" y="456" fill="#101c9c">X</text>
        <text x="699" y="494" fill="#1456c0">ZM</text>
        <text x="702" y="502" fill="#1456c0">ZC</text>
        <text x="598" y="504" fill="#2f9a45">YM</text>
        <text x="653" y="504" fill="#2f9a45">YC</text>
        <text x="664" y="504" fill="#101c9c">Y</text>
      </g>

      <circle cx="650.500" cy="573.500" r="13" fill="none" stroke="#222" strokeWidth="1.600" />
      <circle cx="650.500" cy="573.500" r="13" fill="none" stroke="#fff" strokeWidth="1.400" strokeDasharray="12 8.420" />
      <path d="M650.500 556V591M633 573.500H668" stroke="#111" strokeWidth="4.600" />
      <path d="M650.500 557V590M634 573.500H667" stroke="#fff" strokeWidth="1.800" />

      <rect x="219" y="908" width="29" height="33" fill="#a6a6a6" stroke="#c8c8c8" />
      <path d="M247 905V935" stroke="#c83c30" strokeWidth="1.600" />
      <path d="M247 893l3.500 15h-7z" fill="#e03c2c" />
      <path d="M200 940.500H245" stroke="#3fa35c" strokeWidth="2" />
      <path d="M199 940.500l13-3v6z" fill="#2f9a45" />
      <circle cx="247" cy="940" r="5" fill="#c8d0dc" />
      <path d="M243 930h8v9q-4 3-8 0z" fill="#1a44c8" />
      <g className="text-[13px]" fontFamily="'Noto Sans', sans-serif">
        <text x="243" y="893" fill="#e03c2c">X</text>
        <text x="190" y="945" fill="#2f9a45">Y</text>
      </g>
    </svg>
  </main>
);

/* ---------- vertical operation strip ---------- */

const VBand = ({ list, last }: { list: string; last?: boolean }) => (
  <div className={last ? "flex flex-col items-center" : "flex flex-col items-center border-b border-gray-300"}>
    <span className="mt-1 mb-[3px] h-[3px] w-8 border-t-3 border-dotted border-gray-400" />
    {list.split(" ").map((t, i) =>
      t === "|" ? (
        <span key={i} className="my-1 h-px w-[30px] bg-gray-300" />
      ) : (
        <button
          key={i}
          aria-label={t}
          className={t === "opTree" ? "flex h-[35px] w-[35px] items-center justify-center border border-[#b4c8c8] bg-[#c8d7d7]" : "flex h-[35px] w-[35px] items-center justify-center"}
        >
          <Ico n={t} />
        </button>
      ),
    )}
    <button aria-label="更多" className="mr-4 flex h-[15px] items-center">
      <svg viewBox="0 0 5 7" className="h-[7px] w-[5px]"><path d="M5 0v7L0 3.500z" fill="#111" /></svg>
    </button>
  </div>
);

/* ---------- operation navigator ---------- */

const Toggle = ({ sign, above, below }: { sign: string; above?: boolean; below?: boolean }) => (
  <svg viewBox="0 0 23 21" className="h-[21px] w-[23px] shrink-0" fill="none">
    <path d={`M10.500 ${above ? 0 : 10}V${below ? 21 : 10}M15 10.500h6`} stroke="#999" strokeDasharray="1 1" />
    <rect x="6.500" y="6.500" width="8" height="8" fill="#fff" stroke="#c4c4c4" />
    <path d={sign === "+" ? "M8 10.500h5M10.500 8v5" : "M8 10.500h5"} stroke="#111" strokeWidth="1.200" />
  </svg>
);

const Branch = ({ end }: { end?: boolean }) => (
  <svg viewBox="0 0 45 21" className="h-[21px] w-[45px] shrink-0">
    <path d={`M32.500 0V${end ? 10 : 21}M32.500 10.500h10`} stroke="#999" strokeDasharray="1 1" fill="none" />
  </svg>
);

const ProgIcon = () => (
  <svg viewBox="0 0 17 16" className="mr-1 h-4 w-[17px] shrink-0">
    <path d="M.500 15V2.500l1-1h5l1.500 2h8V15z" fill="#f4dc8c" stroke="#8c7430" />
    <rect x="7" y="6" width="8" height="9" fill="#fff" />
    <path d="M8 7.500h5.500v3H9v3h5" fill="none" stroke="#26309c" strokeWidth="1.600" />
  </svg>
);

const Bang = () => (
  <svg viewBox="0 0 16 20" className="h-5 w-4 shrink-0">
    <path d="M4 4q0-3.500 4-3.500t4 3.500L9.500 13h-3z" fill="#f8d820" stroke="#b89a20" strokeWidth=".8" />
    <circle cx="8" cy="16.500" r="2.500" fill="#f8d820" stroke="#b89a20" strokeWidth=".8" />
  </svg>
);

const Stop = () => (
  <svg viewBox="0 0 16 16" className="mr-0.5 h-4 w-4 shrink-0">
    <circle cx="8" cy="8" r="6.500" fill="#fff" stroke="#c82820" strokeWidth="2.600" />
    <path d="M3.500 12.500l9-9" stroke="#c82820" strokeWidth="2.600" />
  </svg>
);

const ContourIcon = () => (
  <svg viewBox="0 0 17 18" className="h-[18px] w-[17px] shrink-0">
    <path d="M1 9q3-6 7-3q3-3 8 3q-1 3-4 3l-4 5l-4-4q-3 0-3-4z" fill="#fff" stroke="#222" strokeWidth="1.300" />
    <path d="M6 1h5v8q-2.500 2-5 0z" fill="#6878cc" stroke="#39458e" strokeWidth=".8" />
  </svg>
);

const CheckMark = () => (
  <svg viewBox="0 0 16 14" className="mx-auto h-3.5 w-4" role="img" aria-label="已生成">
    <path d="M1 7l3-1l2 3q3-6 9-8q-5 5-8 12H5z" fill="#1fae3c" stroke="#158a2c" strokeWidth=".6" />
  </svg>
);

const cell = "border-r border-b border-[#e6e6e6] p-0 pl-1";

const rows: { tree: ReactNode; op?: boolean; sel?: boolean }[] = [
  { tree: <span className="pl-[3px]">NC_PROGRAM</span> },
  { tree: <><Toggle sign="+" below /><ProgIcon />未用项</> },
  { tree: <><Toggle sign="+" above below /><Stop /><ProgIcon />PROGRAM_1</> },
  { tree: <><Toggle sign="+" above below /><Bang /><span className="w-0.5" /><ProgIcon />PROGRAM_2</> },
  { tree: <><Toggle sign="-" above /><Bang /><span className="w-0.5" /><ProgIcon />PROGRAM_3</> },
  { tree: <><Branch /><Bang /><span className="w-0.5" /><ContourIcon /><span className="pl-1">FIXED_CONTOUR</span></>, op: true },
  { tree: <><Branch end /><Bang /><span className="w-0.5" /><ContourIcon /><span className="flex-1 self-stretch bg-[#2a93ff] pl-1 leading-[22px]">FIXED_CONTOUR_1</span></>, op: true, sel: true },
  ...Array.from({ length: 27 }, () => ({ tree: null })),
];

const Navigator = () => (
  <section className="flex w-[34.300%] shrink-0 flex-col bg-white pr-2 pl-2.5">
    <header className="flex h-8 shrink-0 items-center gap-3 pl-[3px] text-sm text-gray-800">
      <svg viewBox="0 0 15 13" className="h-[13px] w-[15px]">
        <rect x=".750" y=".750" width="13.500" height="11.500" fill="none" stroke="#333" strokeWidth="1.500" /><path d="M0 2h15" stroke="#333" strokeWidth="2" />
      </svg>
      <h2>工序导航器 - 程序顺序</h2>
    </header>
    <div className="min-h-0 flex-1 border border-b-0 border-gray-300 pt-px pl-px">
      <table className="h-full w-full table-fixed border-separate border-spacing-0 text-sm text-gray-800">
        <colgroup>
          <col className="w-[223px]" />
          <col className="w-[97px]" />
          <col className="w-[45px]" />
          <col className="w-[89px]" />
          <col />
        </colgroup>
        <thead>
          <tr className="h-6 bg-[#eeeeee] text-left">
            {["名称", "刀具", "刀轨", "余量", "底面余..."].map((h) => (
              <th key={h} className="overflow-hidden border-r border-b border-gray-300 p-0 pl-1.5 leading-5 font-normal whitespace-nowrap">{h}</th>
            ))}
          </tr>
        </thead>
        <tbody className="leading-5">
          {rows.map((r, i) => (
            <tr key={i} className={`${i % 2 ? "bg-[#f8f8f8]" : "bg-white"} ${r.sel ? "text-white" : r.op ? "text-[#7a52c8]" : ""}`}>
              <td className="overflow-hidden border-b border-[#e6e6e6] p-0">
                <div className="flex h-[21px] items-center whitespace-nowrap">{r.tree}</div>
              </td>
              <td className={`${cell} border-l border-l-[#222] ${r.sel ? "bg-[#2a93ff]" : ""}`}>{r.op && "R0.25"}</td>
              <td className={`${cell} ${r.sel ? "bg-[#2a93ff]" : ""}`}>{r.op && <div className="pr-[18px]"><CheckMark /></div>}</td>
              <td className={`${cell} ${r.sel ? "bg-[#2a93ff]" : ""}`}>{r.op && "0.0000"}</td>
              <td className={`${cell} ${r.sel ? "bg-[#2a93ff]" : ""}`}>{r.op && "0.0000"}</td>
            </tr>
          ))}
        </tbody>
      </table>
    </div>
    <div className="flex h-[21px] shrink-0 items-center border-x border-gray-300 bg-[#efefef] pb-[3px]">
      <button aria-label="向左滚动" className="flex w-[21px] justify-center">
        <svg viewBox="0 0 8 10" className="h-2.5 w-2"><path d="M6.500 1l-4 4l4 4" fill="none" stroke="#444" strokeWidth="2" /></svg>
      </button>
      <div className="h-[17px] flex-1"><div className="h-full w-[54%] bg-[#cbcbcb]" /></div>
      <button aria-label="向右滚动" className="flex w-[21px] justify-center">
        <svg viewBox="0 0 8 10" className="h-2.5 w-2"><path d="M1.500 1l4 4l-4 4" fill="none" stroke="#444" strokeWidth="2" /></svg>
      </button>
    </div>
    <div className="mb-1.5 h-1.5 shrink-0 border border-gray-400 bg-[#d4d4d4]" />
  </section>
);

/* ---------- resource bar ---------- */

const resources: [string, string][] = [
  ["rAsm", "h-12"],
  ["rCons", "h-12"],
  ["rPart", "h-12"],
  ["rOp", "h-12"],
  ["rTable", "h-12"],
  ["rMach", "h-12"],
  ["rBooks", "h-12"],
  ["rInfo", "mt-1.5 h-[61px]"],
  ["rPage", "h-[61px]"],
  ["rClock", "h-[55px] pt-1.5"],
  ["rRainbow", "h-12"],
  ["rWand", "h-12"],
  ["rRobot", "h-12"],
  ["rBook", "h-12"],
  ["rCard", "h-[34px]"],
];

const ResourceBar = () => (
  <aside className="flex w-9 shrink-0 flex-col border-l border-gray-400 bg-[#dcdcdc]">
    <button aria-label="资源条选项" className="mb-5 flex h-7 items-center justify-center">
      <Ico n="gear" small />
    </button>
    {resources.map(([n, h]) => (
      <button
        key={n}
        aria-label={n}
        className={`flex shrink-0 items-center ${h} ${n === "rOp" ? "-ml-px w-[34px] border-y border-r border-gray-400 bg-white pl-0.5" : "pl-px"}`}
      >
        <Ico n={n} />
      </button>
    ))}
    {["M1 6h7M1 4h7L4.500 0z", "M1 5h7L4.500 1z", "M1 2h7L4.500 6z", "M0 1h9M1 3h7L4.500 7z"].map((d, i) => (
      <button key={d} aria-label="滚动资源条" className="flex h-[18px] items-center pl-[11px]">
        <svg viewBox="0 0 9 7" className="h-[7px] w-[9px]"><path d={d} fill={i < 2 ? "#aaa" : "#222"} stroke={i < 2 ? "#aaa" : "#222"} strokeWidth=".800" /></svg>
      </button>
    ))}
  </aside>
);

/* ---------- page ---------- */

export default function App() {
  return (
    <div className="h-screen bg-black px-[9.0625%] font-['Noto_Sans','Noto_Sans_CJK_SC',sans-serif]">
      <div className="flex h-full flex-col overflow-hidden border-t-2 border-[#eaf2f3] bg-white">
        <MenuBar />

        <div className="flex h-[39px] shrink-0 items-center border-b border-gray-200">
          <Grip />
          <button className="flex w-[77px] shrink-0 items-center gap-1 pl-1 text-[13px] text-gray-900">
            <Ico n="start" />
            <span className="whitespace-nowrap">启动</span>
            <Caret />
          </button>
          <Tools list="newf open save print | _ cut copy paste del | undo v | wcs v | info |" />
          <label className="ml-1 flex h-[23px] w-[142px] shrink-0 items-center border border-gray-400 bg-white pr-0.5">
            <input aria-label="查找命令" defaultValue="查找命令" className="min-w-0 flex-1 pl-0.5 text-[13px] text-gray-900 outline-none" />
            <Ico n="mag" small />
          </label>
          <span className="w-1 shrink-0" />
          <Overflow />
          <span className="h-full w-px bg-gray-200" />
          <Grip />
          <Tools list="fit v shade v cube v clipA clipB v bg v | slabOut slabIn" />
          <Overflow />
          <span className="h-full w-px bg-gray-200" />
          <Grip />
          <Tools list="_ line v line arc curves shapes textA" />
          <Overflow />
          <span className="h-full w-px bg-gray-200" />
        </div>

        <div className="flex h-[38px] shrink-0 items-center border-b border-gray-200">
          <Grip />
          <Tools list="_ layerBox v abs xdim sheets left right leftBox _ rightBox winL winR _ addBox rgb wire lamp octo folderBox _" />
          <Overflow />
          <span className="h-full w-px bg-gray-200" />
          <Grip />
          <Tools list="swap move2 datum measureBox bound radius wireBox surfUp _ stripes infoBox cyls redBox plane split stretch _ trimBox rect v hex v funnel pocket csys target ringBox textPen circle" />
          <button aria-label="更多工具" className="mr-1 ml-auto flex h-8 w-3 flex-col items-center justify-between pb-1">
            <svg viewBox="0 0 10 8" className="h-2 w-2.5"><path d="M1 1l3 3l-3 3M6 1l3 3l-3 3" fill="none" stroke="#111" strokeWidth="1.600" /></svg>
            <Caret />
          </button>
        </div>

        <div className="flex h-9 shrink-0 items-center">
          <span className="w-[9px]" />
          <Combo label="类型过滤器" value="无选择过滤器" width="w-[151px]" />
          <span className="w-[9px]" />
          <Combo label="选择范围" value="整个装配" width="w-[158px]" />
          <span className="w-1" />
          <Tools small list="asm | filterUndo filterBox v curveUndo multiUndo" />
          <span className="ml-0.5 h-[30px] w-px shrink-0 bg-gray-300" />
          <Tools small list="hexDot marquee v | roof cubeTop" />
          <button aria-label="工具条选项" className="mr-1 ml-auto flex h-8 w-3 items-end justify-center pb-1.5">
            <Caret />
          </button>
        </div>

        <div className="flex min-h-0 flex-1 border-t border-gray-400 pl-[3px]">
          <Viewport />
          <aside className="w-10 shrink-0 border-r border-gray-400 bg-white">
            <VBand list="opTree toolTree geoTree waveTree" />
            <VBand list="opNew toolNew geoNew waveNew opsNew" />
            <VBand list="genPath editPath delPath replay listPath verify vlogo gouge | holder | outTool post machine shopDoc" last />
          </aside>
          <Navigator />
          <ResourceBar />
        </div>

        <div className="flex h-[39px] shrink-0 items-center border-b-2 border-[#c4cbcb] pt-0.5">
          <Grip />
          <span className="w-[7px]" />
          <Combo label="工作图层" value="6" width="w-14" />
          <span className="w-1" />
          <Tools list="layers layers v wcsDyn v | editObj palette | showHide v | measD v measR" />
          <Overflow />
          <span className="h-full w-px bg-gray-200" />
          <Grip />
          <Tools list="region v plus v extrude v project lshape mesh v" />
          <Overflow />
          <span className="h-full w-px bg-gray-200" />
        </div>

        <footer className="flex h-[25px] shrink-0 items-center justify-end pt-0.5 pr-[61px]">
          <button aria-label="全屏" className="flex">
            <Ico n="full" small />
          </button>
        </footer>
        <div className="h-1 shrink-0 border-t border-gray-300 bg-[#5a8484]" />
      </div>
    </div>
  );
}
